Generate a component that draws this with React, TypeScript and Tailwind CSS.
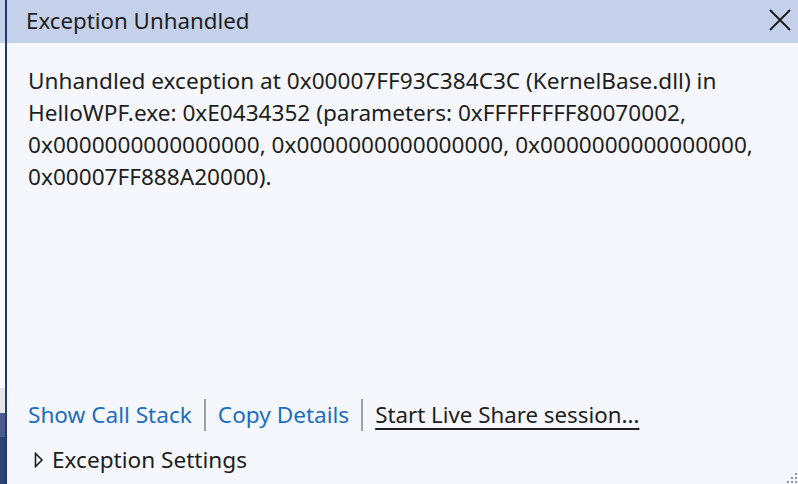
import React from "react";

export default function App() {
  const font = { fontFamily: '"Noto Sans", "Open Sans", sans-serif' };
  return (
    <div className="flex w-[798px] h-[484px] overflow-hidden bg-[#f5f7fc]" style={font}>
      <div className="flex flex-col w-[5px] h-full">
        <div className="h-[43px] bg-[#c5d0ea]" />
        <div className="h-[345px] bg-[#f7f8fb]" />
        <div className="h-[25px] bg-[#e4e5ea]" />
        <div className="h-[24px] bg-[#4b5b8c]" />
        <div className="flex-1 bg-[#2e4172]" />
      </div>
      <div className="w-[2px] h-full bg-[#1f3a6e]" />
      <div className="flex-1 flex flex-col h-full relative">
        <div className="h-[43px] bg-[#c5d0ea] flex items-center justify-between pl-[19px] pr-[6px]">
          <span className="text-[22.3px] text-[#1e1e1e] leading-none">Exception Unhandled</span>
          <svg width="24" height="24" viewBox="0 0 24 24" className="mb-[4px]">
            <path d="M2 2 L22 22 M22 2 L2 22" stroke="#1e1e1e" strokeWidth="2" fill="none" />
          </svg>
        </div>
        <div className="flex-1 flex flex-col pl-[21px] pt-[22px]">
          <div className="text-[22.6px] leading-[32px] text-[#1e1e1e] whitespace-nowrap">
            <div>Unhandled exception at 0x00007FF93C384C3C (KernelBase.dll) in</div>
            <div>HelloWPF.exe: 0xE0434352 (parameters: 0xFFFFFFFF80070002,</div>
            <div>0x0000000000000000, 0x0000000000000000, 0x0000000000000000,</div>
            <div>0x00007FF888A20000).</div>
          </div>
          <div className="flex-1" />
          <div className="flex items-center h-[32px] text-[22.6px] leading-[32px] whitespace-nowrap">
            <span className="text-[#1a6ec0]">Show Call Stack</span>
            <span className="w-[2px] h-[32px] bg-[#a0a0a0] mx-[12px]" />
            <span className="text-[#1a6ec0]">Copy Details</span>
            <span className="w-[2px] h-[32px] bg-[#a0a0a0] mx-[12px]" />
            <span className="text-[#1e1e1e] text-[22.3px] underline underline-offset-[5px] decoration-[1.5px]">Start Live Share session...</span>
          </div>
          <div className="flex items-center h-[32px] mt-[13px] mb-[8px] pl-[6px] text-[22.6px] text-[#1e1e1e] whitespace-nowrap">
            <svg width="10" height="16" viewBox="0 0 10 16" className="mr-[8px]">
              <path d="M1.5 1.5 L8 8 L1.5 14.5 Z" stroke="#1e1e1e" strokeWidth="1.6" fill="none" strokeLinejoin="miter" />
            </svg>
            <span>Exception Settings</span>
          </div>
        </div>
        <svg width="14" height="14" viewBox="0 0 14 14" className="absolute right-0 bottom-0">
          <rect x="11" y="3" width="2" height="2" fill="#8b95b3" />
          <rect x="7" y="7" width="2" height="2" fill="#8b95b3" />
          <rect x="11" y="7" width="2" height="2" fill="#8b95b3" />
          <rect x="3" y="11" width="2" height="2" fill="#8b95b3" />
          <rect x="7" y="11" width="2" height="2" fill="#8b95b3" />
          <rect x="11" y="11" width="2" height="2" fill="#8b95b3" />
        </svg>
      </div>
    </div>
  );
}
